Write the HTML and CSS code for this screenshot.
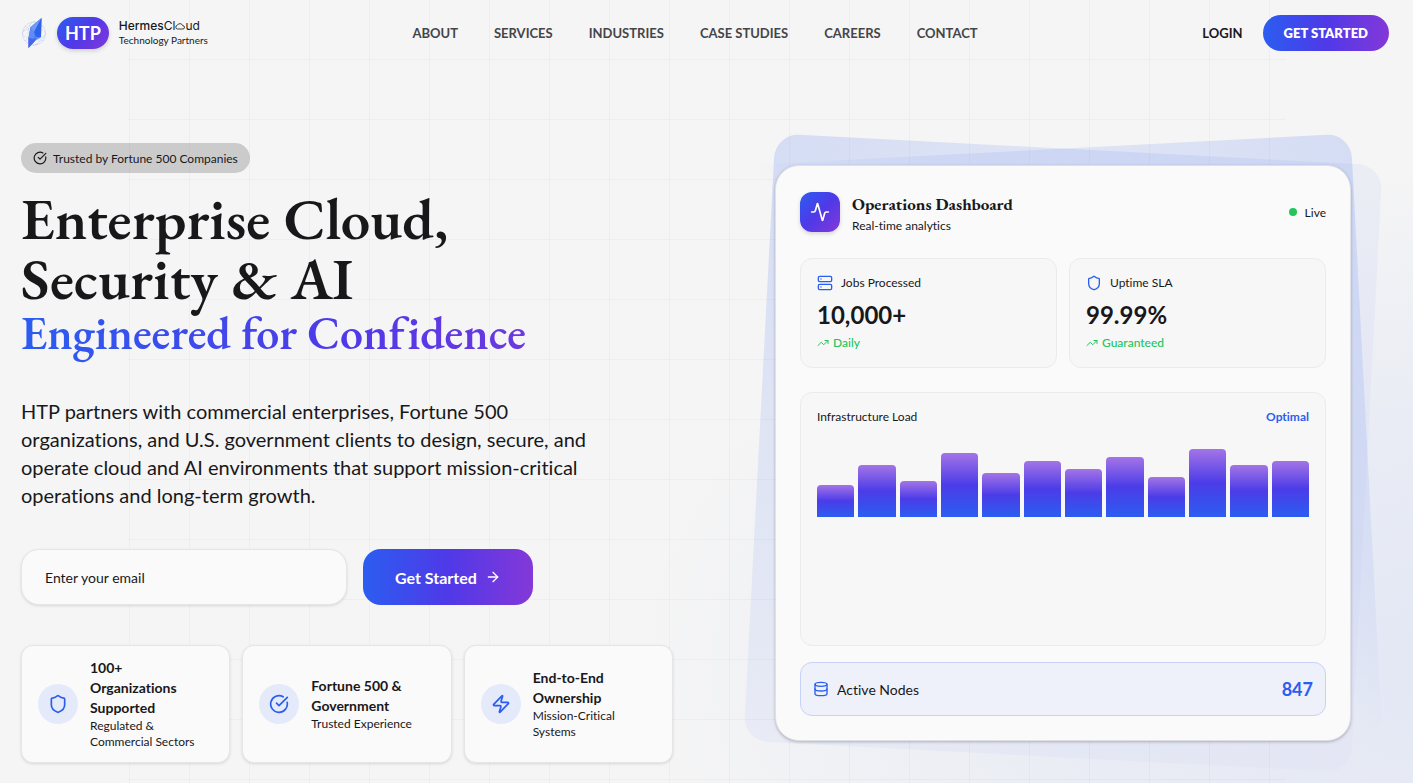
FILE: index.html
```html
<!DOCTYPE html>
<html lang="en">
<head>
    <meta charset="UTF-8">
    <meta name="viewport" content="width=device-width, initial-scale=1.0">
    <title>HermesCloud Technology Partners</title>
    <link rel="stylesheet" href="styles.css">
</head>
<body>
    <div class="page">
        <div class="grid-lines"></div>

        <header class="navbar">
            <a href="#" class="brand" aria-label="HermesCloud Technology Partners">
                <svg class="brand-mark" viewBox="0 0 26 32" aria-hidden="true">
                    <defs>
                        <linearGradient id="shard" x1="1" y1="0" x2="0" y2="1">
                            <stop offset="0" stop-color="#2f6bf0"/>
                            <stop offset="0.5" stop-color="#5c8df4"/>
                            <stop offset="1" stop-color="#3f5fe8"/>
                        </linearGradient>
                    </defs>
                    <g fill="none" stroke="#b4bff5" stroke-width="0.7">
                        <circle cx="13" cy="16.500" r="11.500" stroke-dasharray="1.500 0.800"/>
                        <ellipse cx="13" cy="16.500" rx="6" ry="11.500" stroke-dasharray="1 1"/>
                        <ellipse cx="13" cy="16.500" rx="11.500" ry="5" stroke-dasharray="1 1"/>
                        <path d="M4 9l18 15M4 24L22 9M2 14l9-8M15 28l9-9" stroke-dasharray="1 1"/>
                    </g>
                    <path d="M20.500 1L20 20l-6 4-6.500 7V21l2-11z" fill="url(#shard)"/>
                    <path d="M20.500 1L9.500 10l3.500 5z" fill="#6f9af5"/>
                    <path d="M20.500 1L13 15l2 5 5 0z" fill="#2f62ea"/>
                    <path d="M9.500 10l-2 11 5 1 .5-7z" fill="#5f8df4"/>
                    <path d="M7.500 21l5 1 2.500-2-1 4-6.500 7z" fill="#4468ec"/>
                </svg>
                <span class="brand-pill">HTP</span>
                <span class="brand-text">
                    <span class="brand-name"><b>Hermes</b>Cl<svg viewBox="0 0 24 16" aria-hidden="true"><path d="M6 14a4.500 4.500 0 0 1-.500-8.900A7 7 0 0 1 18.500 6a4 4 0 0 1 .500 8z"/></svg>ud</span>
                    <span class="brand-sub">Technology Partners</span>
                </span>
            </a>
            <nav class="nav-links">
                <a href="#">ABOUT</a>
                <a href="#">SERVICES</a>
                <a href="#">INDUSTRIES</a>
                <a href="#">CASE STUDIES</a>
                <a href="#">CAREERS</a>
                <a href="#">CONTACT</a>
            </nav>
            <div class="nav-actions">
                <a href="#" class="login">LOGIN</a>
                <button type="button" class="nav-cta">GET STARTED</button>
            </div>
        </header>

        <main class="hero">
            <section class="hero-text">
                <div class="badge">
                    <svg class="icon icon-14" viewBox="0 0 24 24"><path d="M21.801 10A10 10 0 1 1 17 3.335"/><path d="m9 11 3 3L22 4"/></svg>
                    <span>Trusted by Fortune 500 Companies</span>
                </div>
                <h1>Enterprise Cloud,<br>Security &amp; AI <span class="accent">Engineered for Confidence</span></h1>
                <p class="lead">HTP partners with commercial enterprises, Fortune 500 organizations, and U.S. government clients to design, secure, and operate cloud and AI environments that support mission-critical operations and long-term growth.</p>

                <form class="signup">
                    <input type="email" placeholder="Enter your email" aria-label="Enter your email">
                    <button type="button">
                        Get Started
                        <svg class="icon icon-16" viewBox="0 0 24 24"><path d="M5 12h14"/><path d="m12 5 7 7-7 7"/></svg>
                    </button>
                </form>

                <div class="features">
                    <div class="feature">
                        <span class="feature-icon"><svg class="icon icon-20" viewBox="0 0 24 24"><path d="M20 13c0 5-3.500 7.500-7.660 8.950a1 1 0 0 1-.670-.010C7.500 20.500 4 18 4 13V6a1 1 0 0 1 1-1c2 0 4.500-1.200 6.240-2.720a1.170 1.170 0 0 1 1.520 0C14.510 3.810 17 5 19 5a1 1 0 0 1 1 1z"/></svg></span>
                        <div>
                            <h3>100+ Organizations Supported</h3>
                            <p>Regulated &amp; Commercial Sectors</p>
                        </div>
                    </div>
                    <div class="feature">
                        <span class="feature-icon"><svg class="icon icon-20" viewBox="0 0 24 24"><path d="M21.801 10A10 10 0 1 1 17 3.335"/><path d="m9 11 3 3L22 4"/></svg></span>
                        <div>
                            <h3>Fortune 500 &amp; Government</h3>
                            <p>Trusted Experience</p>
                        </div>
                    </div>
                    <div class="feature">
                        <span class="feature-icon"><svg class="icon icon-20" viewBox="0 0 24 24"><path d="M4 14a1 1 0 0 1-.780-1.630l9.900-10.200a.5.5 0 0 1 .860.460l-1.920 6.020A1 1 0 0 0 13 10h7a1 1 0 0 1 .780 1.630l-9.900 10.200a.5.5 0 0 1-.860-.460l1.920-6.020A1 1 0 0 0 11 14z"/></svg></span>
                        <div>
                            <h3>End-to-End Ownership</h3>
                            <p>Mission-Critical Systems</p>
                        </div>
                    </div>
                </div>
            </section>

            <section class="showcase">
                <div class="plate plate-right"></div>
                <div class="plate plate-left"></div>
                <div class="dashboard">
                    <div class="dash-head">
                        <span class="dash-icon"><svg class="icon icon-20" viewBox="0 0 24 24"><path d="M22 12h-2.480a2 2 0 0 0-1.930 1.460l-2.350 8.360a.25.25 0 0 1-.480 0L9.240 2.180a.25.25 0 0 0-.480 0l-2.350 8.360A2 2 0 0 1 4.490 12H2"/></svg></span>
                        <div class="dash-title">
                            <h2>Operations Dashboard</h2>
                            <p>Real-time analytics</p>
                        </div>
                        <span class="live">Live</span>
                    </div>

                    <div class="stats">
                        <div class="stat">
                            <div class="stat-label">
                                <svg class="icon icon-16" viewBox="0 0 24 24"><rect width="20" height="8" x="2" y="2" rx="2"/><rect width="20" height="8" x="2" y="14" rx="2"/><path d="M6 6h.010M6 18h.010"/></svg>
                                <span>Jobs Processed</span>
                            </div>
                            <div class="stat-value">10,000+</div>
                            <div class="stat-trend">
                                <svg class="icon icon-12" viewBox="0 0 24 24"><path d="m22 7-8.500 8.500-5-5L2 17"/><path d="M16 7h6v6"/></svg>
                                <span>Daily</span>
                            </div>
                        </div>
                        <div class="stat">
                            <div class="stat-label">
                                <svg class="icon icon-16" viewBox="0 0 24 24"><path d="M20 13c0 5-3.500 7.500-7.660 8.950a1 1 0 0 1-.670-.010C7.500 20.500 4 18 4 13V6a1 1 0 0 1 1-1c2 0 4.500-1.200 6.240-2.720a1.170 1.170 0 0 1 1.520 0C14.510 3.810 17 5 19 5a1 1 0 0 1 1 1z"/></svg>
                                <span>Uptime SLA</span>
                            </div>
                            <div class="stat-value">99.99%</div>
                            <div class="stat-trend">
                                <svg class="icon icon-12" viewBox="0 0 24 24"><path d="m22 7-8.500 8.500-5-5L2 17"/><path d="M16 7h6v6"/></svg>
                                <span>Guaranteed</span>
                            </div>
                        </div>
                    </div>

                    <div class="load">
                        <div class="load-head">
                            <span>Infrastructure Load</span>
                            <strong>Optimal</strong>
                        </div>
                        <div class="bars">
                            <div class="bar" style="height: 40%"></div>
                            <div class="bar" style="height: 65%"></div>
                            <div class="bar" style="height: 45%"></div>
                            <div class="bar" style="height: 80%"></div>
                            <div class="bar" style="height: 55%"></div>
                            <div class="bar" style="height: 70%"></div>
                            <div class="bar" style="height: 60%"></div>
                            <div class="bar" style="height: 75%"></div>
                            <div class="bar" style="height: 50%"></div>
                            <div class="bar" style="height: 85%"></div>
                            <div class="bar" style="height: 65%"></div>
                            <div class="bar" style="height: 70%"></div>
                        </div>
                    </div>

                    <div class="nodes">
                        <svg class="icon icon-16" viewBox="0 0 24 24"><ellipse cx="12" cy="5" rx="9" ry="3"/><path d="M3 5v14a9 3 0 0 0 18 0V5"/><path d="M3 12a9 3 0 0 0 18 0"/></svg>
                        <span>Active Nodes</span>
                        <strong>847</strong>
                    </div>
                </div>
            </section>
        </main>
    </div>
</body>
</html>
```
FILE: styles.css
```css
* {
    box-sizing: border-box;
    margin: 0;
    padding: 0;
}
:root {
    --blue: #2b5df0;
    --text: #18181b;
    --green: #22c55e;
    --brand: linear-gradient(90deg, #2b5df0, #4f39e8 50%, #8438d8);
    --brand-diag: linear-gradient(135deg, #2b5df0, #4f39e8 50%, #8438d8);
}
body {
    font-family: Lato, "Liberation Sans", sans-serif;
    font-variant-ligatures: none;
    color: var(--text);
    background: #f5f5f5;
}
a {
    color: inherit;
    text-decoration: none;
}
button {
    border: none;
    color: #fff;
    font-family: inherit;
    cursor: pointer;
    background: var(--brand);
}
.page {
    position: relative;
    min-height: 100vh;
    overflow: hidden;
    background: radial-gradient(850px 500px at 105% 85%, rgba(43, 93, 240, 0.09), rgba(43, 93, 240, 0.06) 50%, transparent);
}
.grid-lines {
    position: absolute;
    inset: 0 9%;
    background-image:
        linear-gradient(to right, rgba(80, 90, 220, 0.05) 1px, transparent 1px),
        linear-gradient(to bottom, rgba(80, 90, 220, 0.05) 1px, transparent 1px);
    background-size: 60px 60px;
    background-position: 2px -1px;
}

/* icons */
.icon {
    flex: none;
    fill: none;
    stroke: currentColor;
    stroke-width: 2;
    stroke-linecap: round;
    stroke-linejoin: round;
}
.icon-12 {
    width: 12px;
    height: 12px;
}
.icon-14 {
    width: 14px;
    height: 14px;
}
.icon-16 {
    width: 16px;
    height: 16px;
}
.icon-20 {
    width: 20px;
    height: 20px;
}

/* header */
.navbar {
    position: relative;
    display: grid;
    grid-template-columns: 1fr auto 1fr;
    align-items: center;
    height: 66px;
    padding: 0 24px 0 21px;
}
.brand {
    display: flex;
    align-items: center;
}
.brand-mark {
    width: 26px;
    height: 32px;
    margin-right: 10px;
}
.brand-pill {
    height: 32px;
    padding: 0 8px;
    margin-right: 10px;
    border-radius: 16px;
    color: #fff;
    font-size: 18px;
    font-weight: 700;
    line-height: 32px;
    background: var(--brand-diag);
    box-shadow: 0 2px 4px rgba(0, 0, 0, 0.15);
}
.brand-text {
    display: flex;
    flex-direction: column;
}
.brand-name {
    font-family: Inter, sans-serif;
    font-size: 12px;
    line-height: 14px;
}
.brand-name b {
    font-weight: 500;
}
.brand-name svg {
    width: 10px;
    height: 7px;
    fill: none;
    stroke: currentColor;
    stroke-width: 2;
}
.brand-sub {
    font-size: 10px;
    line-height: 14px;
}
.nav-links {
    display: flex;
    gap: 36px;
    margin-right: 20px;
    font-size: 13px;
    font-weight: 700;
    color: #454548;
}
.nav-actions {
    display: flex;
    justify-content: flex-end;
    align-items: center;
    gap: 20px;
}
.login {
    font-size: 13px;
    font-weight: 700;
}
.nav-cta {
    height: 36px;
    padding: 0 21px;
    border-radius: 18px;
    font-size: 13px;
    font-weight: 800;
}

/* hero */
.hero {
    position: relative;
    display: grid;
    grid-template-columns: 1fr 1fr;
    gap: 64px;
    align-items: center;
    padding: 77px 24px 20px 21px;
}
.badge {
    display: inline-flex;
    align-items: center;
    gap: 6px;
    height: 30px;
    padding: 0 12px;
    border-radius: 15px;
    font-size: 12px;
    background: rgba(0, 0, 0, 0.17);
    vertical-align: top;
}
h1 {
    margin: 16px 0 40px;
    font-family: "EB Garamond", "Liberation Serif", serif;
    font-size: 59px;
    font-weight: 600;
    line-height: 60px;
}
.accent {
    display: block;
    padding-bottom: 8px;
    margin-bottom: -8px;
    font-size: 46px;
    line-height: 48px;
    color: transparent;
    background: var(--brand);
    -webkit-background-clip: text;
    background-clip: text;
}
.lead {
    max-width: 576px;
    margin-bottom: 40px;
    font-size: 20px;
    line-height: 28px;
}
.signup {
    display: flex;
    gap: 16px;
    margin-bottom: 40px;
}
.signup input {
    width: 50%;
    height: 56px;
    padding: 0 23px;
    border: 1px solid #e6e6e8;
    border-radius: 18px;
    font-family: inherit;
    font-size: 14px;
    background: #fafafa;
    box-shadow: 0 1px 3px rgba(0, 0, 0, 0.12);
}
.signup input::placeholder {
    color: var(--text);
    opacity: 1;
}
.signup button {
    display: flex;
    align-items: center;
    gap: 8px;
    height: 56px;
    padding: 0 32px;
    border-radius: 18px;
    font-size: 16px;
    font-weight: 700;
}
.features {
    display: grid;
    grid-template-columns: repeat(3, 1fr);
    gap: 12px;
}
.feature {
    display: flex;
    align-items: center;
    gap: 12px;
    padding: 12px 20px 12px 16px;
    border: 1px solid #e6e6e8;
    border-radius: 12px;
    background: #fafafa;
    box-shadow: 0 1px 3px rgba(0, 0, 0, 0.12);
}
.feature-icon {
    display: grid;
    place-items: center;
    flex: none;
    width: 40px;
    height: 40px;
    border-radius: 50%;
    color: var(--blue);
    background: #e4eaf9;
}
.feature h3 {
    font-size: 14px;
    font-weight: 700;
    line-height: 20px;
}
.feature p {
    font-size: 12px;
    line-height: 16px;
}

/* dashboard card */
.showcase {
    position: relative;
    width: 100%;
    max-width: 576px;
    justify-self: center;
}
.plate {
    position: absolute;
    inset: -16px;
    border-radius: 24px;
}
.plate-right {
    transform: rotate(3deg);
    background: linear-gradient(135deg, rgba(43, 93, 240, 0.16), rgba(43, 93, 240, 0.05) 50%, rgba(147, 51, 234, 0.02));
}
.plate-left {
    transform: rotate(-3deg);
    background: linear-gradient(225deg, rgba(43, 93, 240, 0.16), rgba(43, 93, 240, 0.08) 35%, transparent 50%);
}
.dashboard {
    position: relative;
    display: flex;
    flex-direction: column;
    aspect-ratio: 1;
    padding: 24px;
    border: 1px solid #e0e1e6;
    border-radius: 24px;
    background: #fafafa;
    box-shadow: 0 1px 3px rgba(0, 0, 0, 0.25);
}
.dash-head {
    display: flex;
    align-items: center;
    gap: 12px;
    height: 44px;
    margin-bottom: 24px;
}
.dash-icon {
    display: grid;
    place-items: center;
    width: 40px;
    height: 40px;
    border-radius: 12px;
    color: #fff;
    background: var(--brand-diag);
    box-shadow: 0 2px 4px rgba(0, 0, 0, 0.15);
}
.dash-title {
    flex: 1;
}
.dash-title h2 {
    font-family: "EB Garamond", "Liberation Serif", serif;
    font-size: 17px;
    line-height: 28px;
}
.dash-title p {
    font-size: 12px;
    line-height: 16px;
}
.live {
    display: flex;
    align-items: center;
    gap: 8px;
    font-size: 12px;
}
.live::before {
    content: "";
    width: 8px;
    height: 8px;
    border-radius: 50%;
    background: var(--green);
}
.stats {
    display: grid;
    grid-template-columns: 1fr 1fr;
    gap: 12px;
    margin-bottom: 24px;
}
.stat,
.load {
    padding: 16px;
    border: 1px solid #ebebec;
    border-radius: 12px;
    background: #f7f7f7;
}
.stat-label {
    display: flex;
    gap: 8px;
    margin-bottom: 8px;
    font-size: 12px;
    line-height: 16px;
}
.stat-label .icon {
    color: var(--blue);
}
.stat-value {
    margin-bottom: 4px;
    font-size: 24px;
    font-weight: 700;
    line-height: 32px;
}
.stat-trend {
    display: flex;
    align-items: center;
    gap: 4px;
    font-size: 12px;
    font-weight: 500;
    line-height: 16px;
    color: var(--green);
}
.load {
    flex: 1;
    margin-bottom: 16px;
}
.load-head {
    display: flex;
    justify-content: space-between;
    margin-bottom: 12px;
    font-size: 12px;
    line-height: 16px;
}
.load-head strong {
    color: var(--blue);
}
.bars {
    display: flex;
    align-items: flex-end;
    gap: 4px;
    height: 80px;
}
.bar {
    flex: 1;
    border-radius: 4px 4px 0 0;
    background: linear-gradient(to top, #2b5df0, #4b3ce8 50%, #a474e6);
}
.nodes {
    display: flex;
    align-items: center;
    gap: 8px;
    padding: 12px;
    border: 1px solid #c6d2f8;
    border-radius: 12px;
    font-size: 14px;
    background: #eef1fa;
}
.nodes .icon {
    color: var(--blue);
}
.nodes strong {
    margin-left: auto;
    color: var(--blue);
    font-size: 18px;
    line-height: 28px;
}
```
